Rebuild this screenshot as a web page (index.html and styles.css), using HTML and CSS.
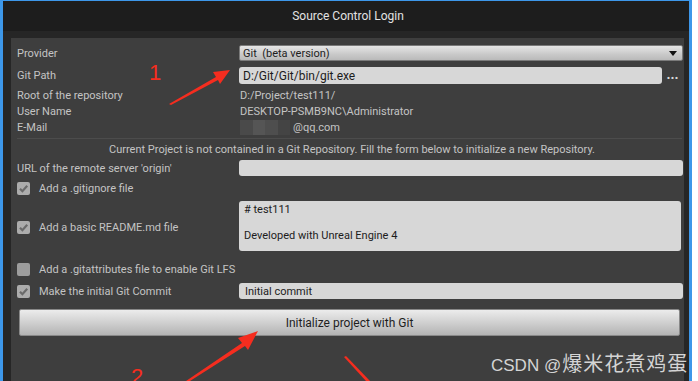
FILE: index.html
```html
<!DOCTYPE html>
<html>
<head>
<meta charset="utf-8">
<link rel="stylesheet" href="styles.css">
</head>
<body>
<div class="window">
  <div class="titlebar">Source Control Login</div>
  <div class="frame">
    <div class="panel">
      <div class="row r-provider">
        <div class="label">Provider</div>
        <div class="dropdown"><span>Git&nbsp; (beta version)</span><span class="caret"></span></div>
      </div>
      <div class="row r-path">
        <div class="label">Git Path</div>
        <div class="pathwrap">
          <div class="textbox big">D:/Git/Git/bin/git.exe</div>
          <div class="dots">...</div>
        </div>
      </div>
      <div class="row r-info">
        <div class="label">Root of the repository</div>
        <div class="value">D:/Project/test111/</div>
      </div>
      <div class="row r-info2">
        <div class="label">User Name</div>
        <div class="value">DESKTOP-PSMB9NC\Administrator</div>
      </div>
      <div class="row r-info2">
        <div class="label">E-Mail</div>
        <div class="value email"><span class="blur"><i></i><i></i><i></i><i></i></span>@qq.com</div>
      </div>
      <div class="sep"></div>
      <div class="message">Current Project is not contained in a Git Repository. Fill the form below to initialize a new Repository.</div>
      <div class="row r-url">
        <div class="label">URL of the remote server 'origin'</div>
        <div class="textbox"></div>
      </div>
      <div class="row r-check">
        <div class="check-label"><span class="cb on"><svg viewBox="0 0 13 13"><path d="M3 6.8 L5.4 9.2 L10.2 3.8" /></svg></span>Add a .gitignore file</div>
      </div>
      <div class="row r-readme">
        <div class="check-label"><span class="cb on"><svg viewBox="0 0 13 13"><path d="M3 6.8 L5.4 9.2 L10.2 3.8" /></svg></span>Add a basic README.md file</div>
        <div class="textarea"># test111<br><br>Developed with Unreal Engine 4</div>
      </div>
      <div class="row r-attr">
        <div class="check-label wide"><span class="cb"></span>Add a .gitattributes file to enable Git LFS</div>
      </div>
      <div class="row r-commit">
        <div class="check-label"><span class="cb on"><svg viewBox="0 0 13 13"><path d="M3 6.8 L5.4 9.2 L10.2 3.8" /></svg></span>Make the initial Git Commit</div>
        <div class="textbox">Initial commit</div>
      </div>
      <div class="button">Initialize project with Git</div>
    </div>
  </div>
</div>
<div class="watermark"><span class="lat">CSDN @</span><span class="cjk">爆米花煮鸡蛋</span></div>
<svg class="annot" width="698" height="381" viewBox="0 0 698 381">
  <g fill="#f52d1f">
    <polygon points="169,104 216,77 213,72 230,70 220,84 218,80 171,105" />
    <polygon points="186,381 242,343 238,338 258,331 248,350 245,346 190,381" />
    <polygon points="344,357 346,356 370,381 366,381" />
  </g>
  <text x="149" y="80" class="num">1</text>
  <text x="131" y="384" class="num">2</text>
</svg>
</body>
</html>
```
FILE: styles.css
```css
html, body {
  margin: 0;
  padding: 0;
  background: #ffffff;
  width: 698px;
  height: 381px;
  overflow: hidden;
  font-family: Roboto, "Noto Sans", sans-serif;
}
.window {
  width: 686px;
  height: 380px;
  border-left: 3px solid #3d97e9;
  border-right: 3px solid #3d97e9;
  border-top: 1px solid #3d97e9;
  background: #262626;
  display: flex;
  flex-direction: column;
}
.titlebar {
  height: 30px;
  background: #1d1d1d;
  color: #e2e2e2;
  font-size: 12px;
  display: flex;
  align-items: center;
  justify-content: center;
  padding-left: 4px;
}
.frame {
  flex: 1;
  background: #262626;
  padding: 7px 5px 0 8px;
  display: flex;
}
.panel {
  flex: 1;
  background: #3e3e3e;
  padding: 7px 1px 0 6px;
  display: flex;
  flex-direction: column;
}
.row {
  display: grid;
  grid-template-columns: 222px 1fr;
  align-items: center;
  height: 16px;
}
.label, .value, .check-label, .message {
  font-size: 11px;
  color: #c4c4c4;
  white-space: nowrap;
}
.value { padding-left: 1px; }
.r-path { margin-top: 6px; height: 17px; }
.r-info { margin-top: 3px; }
.r-url { margin-top: 2px; }
.r-check { margin-top: 4px; }
.r-readme { margin-top: 5px; height: 50px; }
.r-readme .check-label { padding-top: 3px; }
.r-attr { margin-top: 10px; }
.r-commit { margin-top: 6px; }
.sep {
  margin-top: 3px;
  height: 1px;
  background: #4c4c4c;
  margin-right: 1px;
}
.message {
  margin-top: 3px;
  height: 16px;
  line-height: 16px;
  text-align: center;
  padding-left: 4px;
}
.dropdown {
  height: 14px;
  border: 1px solid #7a7a7a;
  border-radius: 2px;
  background: linear-gradient(#e6e6e6, #c9c9c9 60%, #bababa);
  display: flex;
  align-items: center;
  justify-content: space-between;
  padding: 0 5px 0 3px;
  font-size: 11px;
  color: #1e1e1e;
}
.caret {
  width: 0;
  height: 0;
  border-left: 4px solid transparent;
  border-right: 4px solid transparent;
  border-top: 5px solid #111;
}
.pathwrap {
  display: flex;
  align-items: center;
  height: 17px;
}
.pathwrap .textbox { flex: 1; height: 17px; }
.dots {
  width: 21px;
  color: #dadada;
  font-size: 14px;
  font-weight: bold;
  text-align: center;
  line-height: 14px;
  padding-bottom: 3px;
  letter-spacing: 0;
}
.textbox {
  height: 16px;
  background: #d7d7d7;
  border-radius: 3px;
  font-size: 11px;
  color: #1c1c1c;
  display: flex;
  align-items: center;
  padding-left: 6px;
}
.textbox.big {
  font-size: 12px;
  padding-left: 4px;
}
.textarea {
  height: 48px;
  background: #d7d7d7;
  border-radius: 3px;
  font-size: 11px;
  line-height: 13px;
  color: #1c1c1c;
  padding: 2px 0 0 5px;
  margin-right: 2px;
}
.email { display: flex; align-items: center; }
.blur {
  display: inline-flex;
  width: 50px;
  height: 15px;
  margin-right: 3px;
}
.blur i {
  flex: 1;
  background: #4a4a4a;
}
.blur i:nth-child(2) { background: #555555; }
.blur i:nth-child(3) { background: #4e4e4e; }
.blur i:nth-child(4) { background: #444444; }
.check-label {
  display: flex;
  align-items: center;
}
.check-label.wide { grid-column: 1 / 3; }
.cb {
  width: 13px;
  height: 13px;
  border-radius: 2px;
  background: #9d9d9d;
  margin-right: 9px;
  display: inline-flex;
}
.cb.on { background: #acacac; }
.cb svg { width: 13px; height: 13px; }
.cb path {
  fill: none;
  stroke: #6a6a6a;
  stroke-width: 2.2;
}
.button {
  margin-top: 10px;
  margin-left: 2px;
  margin-right: 3px;
  height: 25px;
  border: 1px solid #888;
  border-radius: 2px;
  background: linear-gradient(#ececec, #d0d0d0 50%, #b3b3b3);
  font-size: 12px;
  color: #1e1e1e;
  display: flex;
  align-items: center;
  justify-content: center;
}
.watermark {
  position: absolute;
  left: 491px;
  top: 348px;
  color: #d4d4d4;
  white-space: nowrap;
  display: flex;
  align-items: baseline;
}
.watermark .lat {
  font-family: "Liberation Sans", sans-serif;
  font-size: 17px;
  margin-right: 1px;
}
.watermark .cjk {
  font-family: "Noto Sans CJK SC", sans-serif;
  font-size: 20px;
  letter-spacing: 1px;
}
.annot {
  position: absolute;
  left: 0;
  top: 0;
  pointer-events: none;
}
.num {
  fill: #f52d1f;
  font-family: "Liberation Sans", sans-serif;
  font-size: 22px;
}
```
